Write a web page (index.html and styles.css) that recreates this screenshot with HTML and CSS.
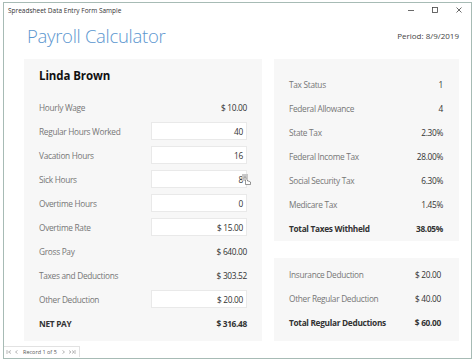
FILE: index.html
```html
<!DOCTYPE html>
<html lang="en">
<head>
    <meta charset="UTF-8">
    <title>Spreadsheet Data Entry Form Sample</title>
    <link rel="stylesheet" href="styles.css">
</head>
<body>

    <div class="window">
        <div class="titlebar">
            <span class="title">Spreadsheet Data Entry Form Sample</span>
            <div class="controls">
                <svg width="8" height="8" viewBox="0 0 8 8"><path d="M1 4.5h6" stroke="#444" stroke-width="0.8"/></svg>
                <svg width="8" height="8" viewBox="0 0 8 8"><rect x="1.5" y="1.5" width="5" height="5" fill="none" stroke="#444" stroke-width="0.8"/></svg>
                <svg width="8" height="8" viewBox="0 0 8 8"><path d="M1.5 1.5l5 5M6.5 1.5l-5 5" stroke="#444" stroke-width="0.8"/></svg>
            </div>
        </div>

        <div class="content">
            <div class="header">
                <h1>Payroll Calculator</h1>
                <div class="period">Period: 8/9/2019</div>
            </div>

            <div class="cards">
                <!-- Employee card -->
                <div class="card card-main">
                    <h2>Linda Brown</h2>
                    <div class="row"><span class="label">Hourly Wage</span><span class="value">$ 10.00</span></div>
                    <div class="row"><span class="label">Regular Hours Worked</span><span class="input">40</span></div>
                    <div class="row"><span class="label">Vacation Hours</span><span class="input">16</span></div>
                    <div class="row">
                        <span class="label">Sick Hours</span>
                        <span class="input">8
                            <span class="spin">
                                <svg width="10" height="12" viewBox="0 0 10 12">
                                    <rect x="0" y="0" width="6" height="7" fill="#c8c8c8"/>
                                    <path d="M1.5 4.5l1.5-2 1.5 2" fill="none" stroke="#888" stroke-width="0.6"/>
                                    <path d="M3.5 6v4.5h5v-2.5l-1.5-0.8-1.5-0.2v-1" fill="#fff" stroke="#555" stroke-width="0.6"/>
                                </svg>
                            </span>
                        </span>
                    </div>
                    <div class="row"><span class="label">Overtime Hours</span><span class="input">0</span></div>
                    <div class="row"><span class="label">Overtime Rate</span><span class="input">$ 15.00</span></div>
                    <div class="row"><span class="label">Gross Pay</span><span class="value">$ 640.00</span></div>
                    <div class="row"><span class="label">Taxes and Deductions</span><span class="value">$ 303.52</span></div>
                    <div class="row"><span class="label">Other Deduction</span><span class="input">$ 20.00</span></div>
                    <div class="row total"><span class="label">NET PAY</span><span class="value">$ 316.48</span></div>
                </div>

                <div class="side">
                    <!-- Taxes -->
                    <div class="card card-tax">
                        <div class="row"><span class="label">Tax Status</span><span class="value">1</span></div>
                        <div class="row"><span class="label">Federal Allowance</span><span class="value">4</span></div>
                        <div class="row"><span class="label">State Tax</span><span class="value">2.30%</span></div>
                        <div class="row"><span class="label">Federal Income Tax</span><span class="value">28.00%</span></div>
                        <div class="row"><span class="label">Social Security Tax</span><span class="value">6.30%</span></div>
                        <div class="row"><span class="label">Medicare Tax</span><span class="value">1.45%</span></div>
                        <div class="row total"><span class="label">Total Taxes Withheld</span><span class="value">38.05%</span></div>
                    </div>

                    <!-- Deductions -->
                    <div class="card card-deduct">
                        <div class="row"><span class="label">Insurance Deduction</span><span class="value">$ 20.00</span></div>
                        <div class="row"><span class="label">Other Regular Deduction</span><span class="value">$ 40.00</span></div>
                        <div class="row total"><span class="label">Total Regular Deductions</span><span class="value">$ 60.00</span></div>
                    </div>
                </div>
            </div>
        </div>

        <div class="navigator">
            <svg width="6" height="6" viewBox="0 0 6 6"><path d="M1 1v4M5 1.5l-2.5 1.5 2.5 1.5" fill="none" stroke="#999" stroke-width="0.7"/></svg>
            <svg width="5" height="6" viewBox="0 0 5 6"><path d="M3.5 1.5l-2 1.5 2 1.5" fill="none" stroke="#999" stroke-width="0.7"/></svg>
            <span class="record">Record 1 of 5</span>
            <svg width="5" height="6" viewBox="0 0 5 6"><path d="M1.5 1.5l2 1.5-2 1.5" fill="none" stroke="#999" stroke-width="0.7"/></svg>
            <svg width="8" height="6" viewBox="0 0 8 6"><path d="M1 1.5l2 1.5-2 1.5M4 1.5l2 1.5-2 1.5M7 1v4" fill="none" stroke="#999" stroke-width="0.7"/></svg>
        </div>
    </div>

</body>
</html>
```

FILE: styles.css
```css
body {
    margin: 0;
    background-color: #ffffff;
    font-family: "Open Sans", "Noto Sans", Arial, sans-serif;
    color: #333333;
}

.window {
    box-sizing: border-box;
    width: 469px;
    height: 357px;
    margin: 2px 0 0 3px;
    border: 1px solid #a7bbb5;
    background-color: #ffffff;
    display: flex;
    flex-direction: column;
}

.titlebar {
    height: 14px;
    display: flex;
    align-items: center;
    justify-content: space-between;
    padding: 0 0 0 4px;
}

.title {
    font-size: 6.5px;
    color: #333333;
}

.controls {
    display: flex;
    align-items: center;
    gap: 16px;
    padding-right: 8px;
}

.controls svg {
    display: block;
}

.content {
    flex: 1;
    padding: 0 11px 0 20px;
}

.header {
    height: 36px;
    display: flex;
    align-items: center;
    justify-content: space-between;
    padding-left: 3px;
}

h1 {
    margin: 0;
    font-size: 18.5px;
    font-weight: 300;
    color: #5b96cf;
    letter-spacing: -0.3px;
}

.period {
    font-size: 8px;
    color: #444444;
    padding-right: 1px;
}

.cards {
    display: flex;
    gap: 12px;
    margin-top: 6px;
}

.card {
    box-sizing: border-box;
    background-color: #f7f7f7;
}

.card-main {
    width: 238px;
    height: 282px;
    padding: 8px 15px 0 15px;
}

.side {
    width: 185px;
    display: flex;
    flex-direction: column;
    gap: 17px;
}

.card-tax {
    height: 182px;
    padding: 13px 16px 0 15px;
}

.card-deduct {
    height: 83px;
    padding: 4px 18px 0 15px;
}

h2 {
    margin: 0 0 10px 0;
    font-size: 11.5px;
    line-height: 18px;
    font-weight: bold;
    color: #111111;
    letter-spacing: -0.1px;
}

.row {
    height: 24px;
    display: flex;
    align-items: center;
    justify-content: space-between;
    font-size: 8.3px;
    letter-spacing: -0.3px;
}

.label {
    color: #767676;
}

.value {
    color: #333333;
}

.input {
    position: relative;
    box-sizing: border-box;
    width: 96px;
    height: 18px;
    line-height: 17px;
    background-color: #ffffff;
    border: 1px solid #e9e9e9;
    text-align: right;
    padding-right: 3px;
    color: #333333;
}

.spin {
    position: absolute;
    top: 3px;
    right: -6px;
}

.spin svg {
    display: block;
}

.total .label,
.total .value {
    font-weight: bold;
    color: #333333;
}

.navigator {
    display: flex;
    align-items: center;
    gap: 2px;
    align-self: flex-start;
    height: 10px;
    padding: 0 3px 0 2px;
    margin-bottom: 1px;
    border-top: 1px solid #e2e2e2;
    border-right: 1px solid #e2e2e2;
}

.navigator svg {
    display: block;
}

.record {
    font-size: 5.5px;
    color: #555555;
    white-space: nowrap;
    padding: 0 2px;
}
```
